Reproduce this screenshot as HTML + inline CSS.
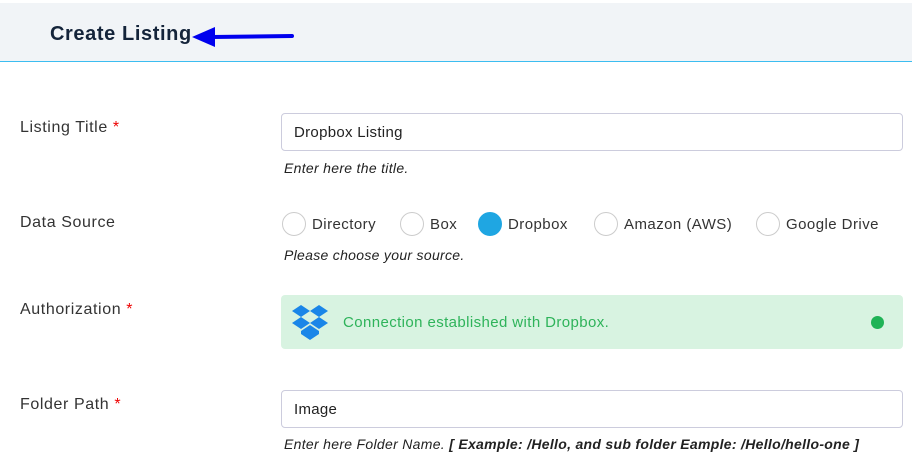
<!DOCTYPE html>
<html><head><style>
*{box-sizing:border-box;margin:0;padding:0}
body{width:912px;height:458px;background:#fff;font-family:"Liberation Sans",sans-serif;color:#333;position:relative;overflow:hidden}
.hdr{position:absolute;left:0;top:3px;width:912px;height:58px;background:#f1f4f7}
.line{position:absolute;left:0;top:61px;width:912px;height:1px;background:#3cbdf0}
.hdr h1{position:absolute;left:50px;top:20px;font-size:20px;font-weight:bold;color:#14243a;letter-spacing:0.6px}
.lbl{position:absolute;left:20px;font-size:16px;color:#333;letter-spacing:0.6px}
.req{color:#e00}
.inp{position:absolute;left:281px;width:622px;height:38px;border:1px solid #ccd;border-radius:4px;padding:0 12px;line-height:38px;font-size:15px;color:#222;letter-spacing:0.3px}
.hint{position:absolute;left:284px;font-size:14px;font-style:italic;color:#222;letter-spacing:0.3px}
.r{position:absolute;top:212px;font-size:15px;color:#333;display:flex;align-items:center;letter-spacing:0.45px}
.r i{display:inline-block;width:24px;height:24px;border-radius:50%;border:1px solid #ccc;margin-right:6px;background:#fff}
.r i.on{background:#1fa6e2;border-color:#1fa6e2}
.auth{position:absolute;left:281px;top:295px;width:622px;height:54px;background:#d8f3e1;border-radius:4px}
</style></head><body>
<div class="hdr"><h1>Create Listing</h1>
<svg style="position:absolute;left:192px;top:23px" width="104" height="24"><polygon points="0,11 23,1 23,21" fill="#0000ee"/><line x1="20" y1="11" x2="100" y2="10" stroke="#0000ee" stroke-width="4" stroke-linecap="round"/></svg></div>
<div class="line"></div>
<div class="lbl" style="top:119px">Listing Title <span class="req">*</span></div>
<div class="inp" style="top:113px">Dropbox Listing</div>
<div class="hint" style="top:160px">Enter here the title.</div>
<div class="lbl" style="top:214px">Data Source</div>
<div class="r" style="left:282px"><i></i>Directory</div>
<div class="r" style="left:400px"><i></i>Box</div>
<div class="r" style="left:478px"><i class="on"></i>Dropbox</div>
<div class="r" style="left:594px"><i></i>Amazon (AWS)</div>
<div class="r" style="left:756px"><i></i>Google Drive</div>
<div class="hint" style="top:247px">Please choose your source.</div>
<div class="lbl" style="top:301px">Authorization <span class="req">*</span></div>
<div class="auth">
<svg style="position:absolute;left:11px;top:9px" width="36" height="38" viewBox="0 0 36 38" fill="#1a86e8">
<polygon points="9,1 18,7 9,13 0,7"/><polygon points="27,1 36,7 27,13 18,7"/>
<polygon points="9,13 18,19 9,25 0,19"/><polygon points="27,13 36,19 27,25 18,19"/>
<polygon points="18,21 27,27 27,30 18,36 9,30 9,27"/></svg>
<div style="position:absolute;left:62px;top:19px;font-size:15px;color:#2eb35a;letter-spacing:0.4px">Connection established with Dropbox.</div>
<div style="position:absolute;left:590px;top:21px;width:13px;height:13px;border-radius:50%;background:#1fb356"></div>
</div>
<div class="lbl" style="top:396px">Folder Path <span class="req">*</span></div>
<div class="inp" style="top:390px">Image</div>
<div class="hint" style="top:436px">Enter here Folder Name. <b>[ Example: /Hello, and sub folder Eample: /Hello/hello-one ]</b></div>
</body></html>
